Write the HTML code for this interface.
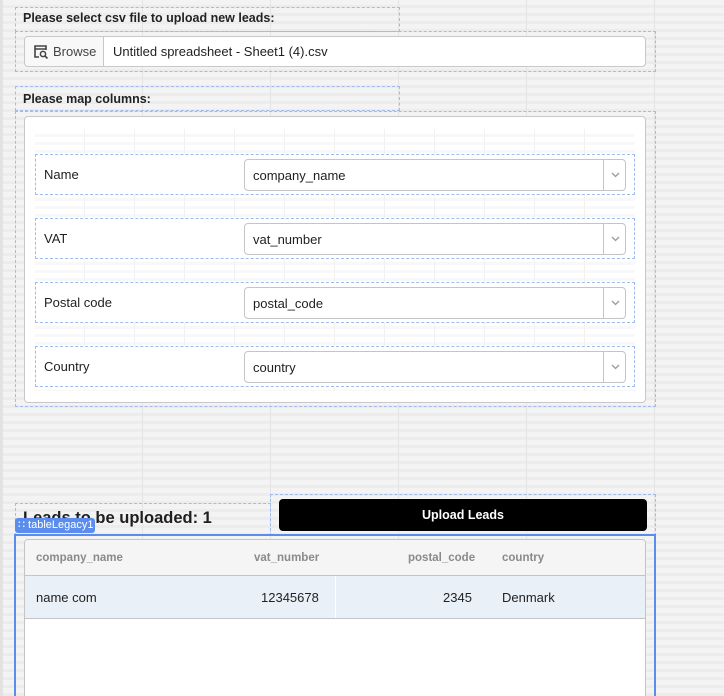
<!DOCTYPE html>
<html><head><style>
*{box-sizing:border-box;margin:0;padding:0}
html,body{width:724px;height:696px;overflow:hidden}
body{font-family:"Liberation Sans",sans-serif;color:#1f1f1f;position:relative;
background-color:#f3f3f3;
background-image:linear-gradient(90deg,transparent 142px,#e4e4e4 142px,#e4e4e4 143px,transparent 143px,transparent 270px,#e4e4e4 270px,#e4e4e4 271px,transparent 271px,transparent 398px,#e4e4e4 398px,#e4e4e4 399px,transparent 399px,transparent 526px,#e4e4e4 526px,#e4e4e4 527px,transparent 527px,transparent 654px,#e4e4e4 654px,#e4e4e4 655px,transparent 655px),repeating-linear-gradient(180deg,#f3f3f3 0,#f3f3f3 5px,#ececec 5px,#ececec 8px);}
.a{position:absolute}
.dash{position:absolute;border:1px dashed #9fbcf0}
.lbl{font-size:12.5px;font-weight:bold;color:#222}
.inp{position:absolute;background:#fff;border:1px solid #c8c8c8;border-radius:4px}
.row{position:absolute;left:35px;width:600px;height:41px;border:1px dashed #9fbcf0;background:#fff}
.row .t{position:absolute;left:8px;top:12px;font-size:13px}
.row .s{position:absolute;left:208px;top:4px;width:382px;height:32px;border:1px solid #c4c4c4;border-radius:4px;background:#fff}
.row .s span{position:absolute;left:8px;top:8px;font-size:13px}
.row .s i{position:absolute;right:0;top:0;width:22px;height:30px;border-left:1px solid #c4c4c4}
.row .s i svg{position:absolute;left:7px;top:12px}
.th{position:absolute;top:12px;font-size:11.5px;font-weight:bold;color:#8a8a8a}
.td{position:absolute;font-size:13px;color:#222}
</style></head><body>
<div class="a" style="left:0;top:0;width:3px;height:696px;background:#e2e2e2"></div>
<div class="dash" style="left:15px;top:7px;width:385px;height:25px"></div>
<div class="a lbl" style="left:23px;top:11px">Please select csv file to upload new leads:</div>
<div class="dash" style="left:15px;top:31px;width:641px;height:41px"></div>
<div class="inp" style="left:24px;top:36px;width:622px;height:31px">
 <div class="a" style="left:0;top:0;width:79px;height:29px;border-right:1px solid #c8c8c8;background:#f8f8f8;border-radius:4px 0 0 4px"></div>
 <svg class="a" style="left:8px;top:7px" width="16" height="15" viewBox="0 0 16 15"><path d="M6 13H2V2h11v4M2 5h11" fill="none" stroke="#444" stroke-width="1.6"/><circle cx="10" cy="10" r="2.6" fill="none" stroke="#444" stroke-width="1.5"/><path d="M12 12l2.5 2.5" stroke="#444" stroke-width="1.6"/></svg>
 <div class="a" style="left:28px;top:7px;font-size:13px;color:#444">Browse</div>
 <div class="a" style="left:88px;top:7px;font-size:13px">Untitled spreadsheet - Sheet1 (4).csv</div>
</div>
<div class="dash" style="left:15px;top:86px;width:385px;height:25px"></div>
<div class="a lbl" style="left:23px;top:92px">Please map columns:</div>
<div class="dash" style="left:15px;top:111px;width:641px;height:296px"></div>
<div class="inp" style="left:24px;top:116px;width:622px;height:287px"></div>
<div class="a" style="left:35px;top:129px;width:600px;height:262px;background-image:linear-gradient(90deg,transparent 49px,#f1f1f1 49px,#f1f1f1 50px,transparent 50px,transparent 99px,#f1f1f1 99px,#f1f1f1 100px,transparent 100px,transparent 149px,#f1f1f1 149px,#f1f1f1 150px,transparent 150px,transparent 199px,#f1f1f1 199px,#f1f1f1 200px,transparent 200px,transparent 249px,#f1f1f1 249px,#f1f1f1 250px,transparent 250px,transparent 299px,#f1f1f1 299px,#f1f1f1 300px,transparent 300px,transparent 349px,#f1f1f1 349px,#f1f1f1 350px,transparent 350px,transparent 399px,#f1f1f1 399px,#f1f1f1 400px,transparent 400px,transparent 449px,#f1f1f1 449px,#f1f1f1 450px,transparent 450px,transparent 499px,#f1f1f1 499px,#f1f1f1 500px,transparent 500px,transparent 549px,#f1f1f1 549px,#f1f1f1 550px,transparent 550px),repeating-linear-gradient(180deg,#fff 0,#fff 5px,#f8f8f8 5px,#f8f8f8 8px)"></div>
<div class="row" style="top:154px"><div class="t">Name</div><div class="s"><span>company_name</span><i><svg width="9" height="6" viewBox="0 0 9 6"><path d="M1 1l3.5 3.5L8 1" fill="none" stroke="#999" stroke-width="1.3"/></svg></i></div></div>
<div class="row" style="top:218px"><div class="t">VAT</div><div class="s"><span>vat_number</span><i><svg width="9" height="6" viewBox="0 0 9 6"><path d="M1 1l3.5 3.5L8 1" fill="none" stroke="#999" stroke-width="1.3"/></svg></i></div></div>
<div class="row" style="top:282px"><div class="t">Postal code</div><div class="s"><span>postal_code</span><i><svg width="9" height="6" viewBox="0 0 9 6"><path d="M1 1l3.5 3.5L8 1" fill="none" stroke="#999" stroke-width="1.3"/></svg></i></div></div>
<div class="row" style="top:346px"><div class="t">Country</div><div class="s"><span>country</span><i><svg width="9" height="6" viewBox="0 0 9 6"><path d="M1 1l3.5 3.5L8 1" fill="none" stroke="#999" stroke-width="1.3"/></svg></i></div></div>

<div class="dash" style="left:15px;top:503px;width:256px;height:33px"></div>
<div class="a" style="left:23px;top:509px;font-size:16.5px;font-weight:bold;color:#1f1f1f">Leads to be uploaded: 1</div>
<div class="dash" style="left:270px;top:494px;width:386px;height:42px"></div>
<div class="a" style="left:279px;top:499px;width:368px;height:32px;background:#000;border-radius:4px;color:#fff;font-size:12.5px;font-weight:bold;text-align:center;line-height:32px">Upload Leads</div>

<div class="a" style="left:14px;top:534px;width:642px;height:170px;border:2px solid #5b8def"></div>
<div class="a" style="left:15px;top:518px;width:80px;height:15px;background:#5b8def;border-radius:3px;color:#fff;font-size:11px;line-height:15px;padding-left:3px">&#8759; tableLegacy1</div>
<div class="a" style="left:24px;top:539px;width:622px;height:170px;border:1px solid #c4c4c4;border-radius:4px;background:#fff;overflow:hidden">
 <div class="a" style="left:0;top:0;width:622px;height:36px;background:#f5f5f5;border-bottom:1px solid #c4c4c4">
  <div class="th" style="left:11px">company_name</div>
  <div class="th" style="left:229px">vat_number</div>
  <div class="th" style="left:383px">postal_code</div>
  <div class="th" style="left:477px">country</div>
 </div>
 <div class="a" style="left:0;top:36px;width:622px;height:43px;background:#eaf0f8;border-bottom:1px solid #c4c4c4">
  <div class="td" style="left:11px;top:14px">name com</div>
  <div class="td" style="left:236px;top:14px">12345678</div>
  <div class="a" style="left:310px;top:0;width:1px;height:42px;background:#fff"></div>
  <div class="td" style="left:418px;top:14px">2345</div>
  <div class="td" style="left:477px;top:14px">Denmark</div>
 </div>
</div>
</body></html>
